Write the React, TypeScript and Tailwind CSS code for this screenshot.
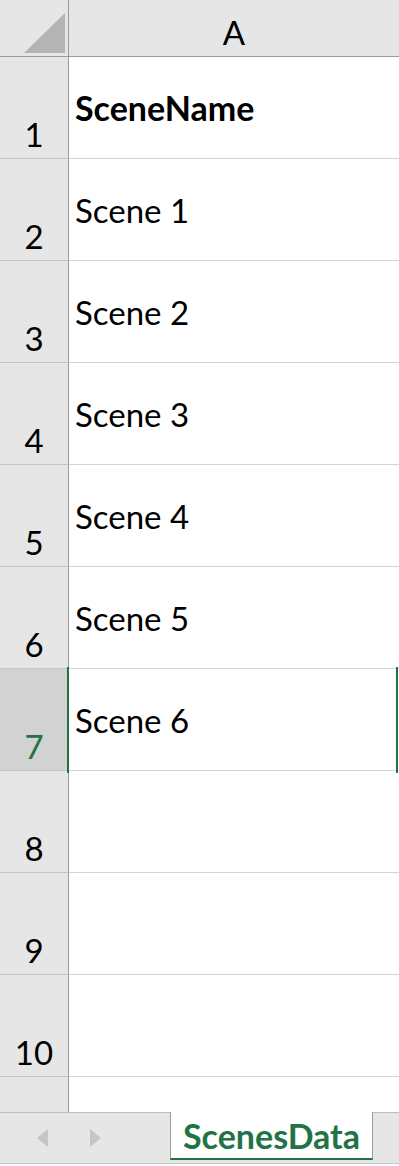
import React from 'react';

const rows = ['SceneName', 'Scene 1', 'Scene 2', 'Scene 3', 'Scene 4', 'Scene 5', 'Scene 6', '', '', ''];

const Row = ({ n, value }: { n: number; value: string }) => {
  const selected = n === 7;
  return (
    <div className="flex h-[102px] shrink-0">
      <div
        className={`w-[69px] shrink-0 border-r border-b border-r-[#9b9b9b] border-b-[#c4c4c4] flex items-end justify-center pb-[4px] text-[33px] leading-[40px] ${
          selected ? 'bg-[#d2d2d2] text-[#217346]' : 'bg-[#e6e6e6] text-black'
        }`}
      >
        {n}
      </div>
      <div className="relative flex-1 border-b border-[#d4d4d4] pl-[6px] pt-[31px]">
        <span className={`leading-[40px] text-black ${n === 1 ? 'font-bold text-[34px]' : 'text-[33px]'}`}>{value}</span>
        {selected && (
          <div className="absolute left-[-2px] right-[1px] top-[-2px] bottom-[-3px] border-x-2 border-[#217346]" />
        )}
      </div>
    </div>
  );
};

export default function App() {
  return (
    <div className="w-[399px] h-[1166px] overflow-hidden bg-white flex flex-col font-['Lato',sans-serif]">
      <div className="flex h-[57px] shrink-0 bg-[#e6e6e6] border-b border-[#9b9b9b]">
        <div className="w-[69px] shrink-0 border-r border-[#9b9b9b] flex items-end justify-end pr-[3px] pb-[3px]">
          <svg width="41" height="40" viewBox="0 0 41 40">
            <polygon points="0,40 41,40 41,0" fill="#b4b4b4" />
          </svg>
        </div>
        <div className="flex-1 text-center pt-[12px] text-[33px] leading-[40px] text-black">A</div>
      </div>

      {rows.map((v, i) => (
        <Row key={i} n={i + 1} value={v} />
      ))}

      <div className="flex flex-1">
        <div className="w-[69px] shrink-0 bg-[#e6e6e6] border-r border-[#9b9b9b]" />
        <div className="flex-1" />
      </div>

      <div className="flex h-[54px] shrink-0 bg-[#e6e6e6] relative">
        <div className="w-[170px] shrink-0 border-t border-[#bdbdbd] flex items-start pt-[16px] pl-[37px] gap-[42px]">
          <svg width="11" height="18" viewBox="0 0 11 18">
            <polygon points="11,0 11,18 0,9" fill="#c6c6c6" />
          </svg>
          <svg width="11" height="18" viewBox="0 0 11 18">
            <polygon points="0,0 0,18 11,9" fill="#c6c6c6" />
          </svg>
        </div>
        <div className="w-[203px] h-[48px] shrink-0 bg-white border-x border-[#9b9b9b] border-b-2 border-b-[#217346] flex justify-center pt-[4px]">
          <span className="text-[34px] leading-[40px] font-bold text-[#217346]">ScenesData</span>
        </div>
        <div className="flex-1 border-t border-[#bdbdbd]" />
        <div className="absolute left-0 right-0 bottom-[2px] h-px bg-[#c8c8c8]" />
        <div className="absolute left-0 right-0 bottom-0 h-[2px] bg-white" />
      </div>
    </div>
  );
}
